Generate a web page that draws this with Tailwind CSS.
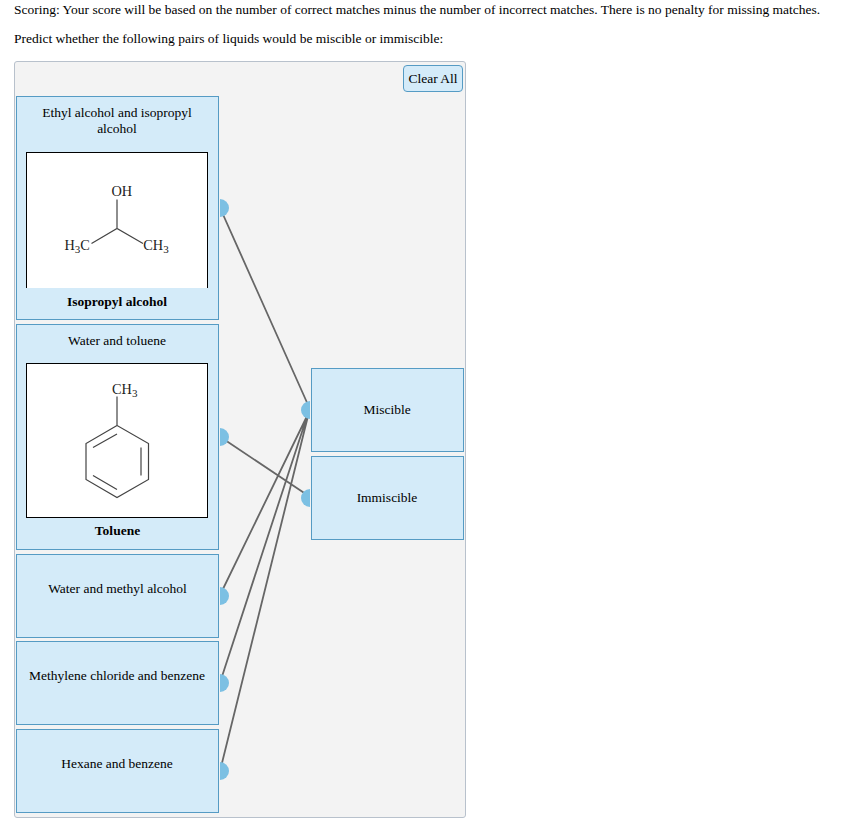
<!DOCTYPE html>
<html lang="en">
<head>
  <meta charset="UTF-8" />
  <title>Miscible or immiscible</title>
  <meta name="viewport" content="width=device-width, initial-scale=1" />
  <script src="https://cdn.jsdelivr.net/npm/@tailwindcss/browser@4"></script>
</head>
<body class="bg-white font-['Liberation_Serif',serif] text-[13.5px] leading-4 text-black pl-[14px] pt-[2px] overflow-hidden">

  <p class="whitespace-nowrap">Scoring: Your score will be based on the number of correct matches minus the number of incorrect matches. There is no penalty for missing matches.</p>
  <p class="mt-[13px] whitespace-nowrap">Predict whether the following pairs of liquids would be miscible or immiscible:</p>

  <!-- Matching board -->
  <div class="relative mt-[14px] w-[452px] h-[757px] rounded-[3px] border border-[#b8c1cc] bg-[#f3f3f3] px-px">
    <div class="flex h-[34px] justify-end pt-[3px] pr-px">
      <button class="h-[27px] w-[60px] rounded border border-[#559bc4] bg-[#d4ebf9] whitespace-nowrap">Clear All</button>
    </div>

    <div class="flex justify-between text-center">
      <!-- Pairs -->
      <div class="w-[203px]">
        <div class="h-[224px] border border-[#559bc4] bg-[#d4ebf9] pl-[9px] pr-[10px] pt-2">
          <p>Ethyl alcohol and isopropyl<br>alcohol</p>
          <div class="mt-[15px] h-[136px] border border-b-0 border-black bg-white">
            <svg class="block" width="180" height="135" viewBox="27 153 180 135" fill="none" stroke="#444" stroke-width="1.2">
              <path d="M117 199.500V228.500M91.500 243.500L117 228.500L143 243.500" />
              <g fill="#222" stroke="none" font-size="14.300">
                <text x="111.500" y="196">OH</text>
                <text x="64.500" y="250">H<tspan font-size="11" dy="3">3</tspan><tspan dy="-3">C</tspan></text>
                <text x="143.300" y="250">CH<tspan font-size="11" dy="3">3</tspan></text>
              </g>
            </svg>
          </div>
          <p class="mt-[6px] font-bold">Isopropyl alcohol</p>
        </div>

        <div class="mt-1 h-[226px] border border-[#559bc4] bg-[#d4ebf9] pl-[9px] pr-[10px] pt-2">
          <p>Water and toluene</p>
          <div class="mt-[14px] h-[155px] border border-black bg-white">
            <svg class="block" width="180" height="153" viewBox="27 364 180 153" fill="none" stroke="#444" stroke-width="1.2">
              <path d="M117 396.500V425.500L148.500 443.500V479.500L117 497.500L86 479.500V443.500L117 425.500M93 447.500L117 434M141 447.500V475.500M93 475.500L117 489.500" />
              <text x="112" y="394" fill="#222" stroke="none" font-size="14.300">CH<tspan font-size="11" dy="3">3</tspan></text>
            </svg>
          </div>
          <p class="mt-[5px] pl-px font-bold">Toluene</p>
        </div>

        <div class="mt-1 h-[84px] border border-[#559bc4] bg-[#d4ebf9] pt-[26px]">Water and methyl alcohol</div>
        <div class="mt-[3px] h-[84px] border border-[#559bc4] bg-[#d4ebf9] pr-px pt-[26px]">Methylene chloride and benzene</div>
        <div class="mt-1 h-[84px] border border-[#559bc4] bg-[#d4ebf9] pr-px pt-[26px]">Hexane and benzene</div>
      </div>

      <!-- Answers -->
      <div class="w-[153px] pt-[272px]">
        <div class="flex h-[84px] items-center justify-center border border-[#559bc4] bg-[#d4ebf9] pr-px">Miscible</div>
        <div class="mt-1 flex h-[84px] items-center justify-center border border-[#559bc4] bg-[#d4ebf9] pr-px">Immiscible</div>
      </div>
    </div>

    <!-- Links between pairs and answers -->
    <svg class="pointer-events-none absolute left-0 top-0" width="450" height="755" viewBox="15 62 450 755">
      <path d="M221 210L309 407M222 438L308 495.500M222 591L309 412M221.500 678L308.500 412M221.500 765L309 412" fill="none" stroke="#666" stroke-width="1.8" />
      <g fill="#7cc0e3">
        <path d="M220 199a9 9 0 0 1 0 18z" />
        <path d="M220 428a9 9 0 0 1 0 18z" />
        <path d="M220 587a9 9 0 0 1 0 18z" />
        <path d="M220 674a9 9 0 0 1 0 18z" />
        <path d="M220 762a9 9 0 0 1 0 18z" />
        <path d="M310 401a9 9 0 0 0 0 18z" />
        <path d="M310 489a9 9 0 0 0 0 18z" />
      </g>
    </svg>
  </div>

</body>
</html>
